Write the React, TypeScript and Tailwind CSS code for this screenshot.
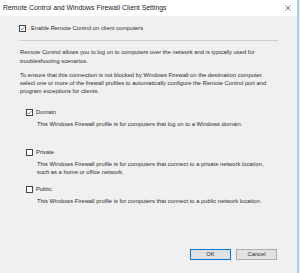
import React from 'react'

function Box({ checked }: { checked?: boolean }) {
  return (
    <span className="flex h-[7px] w-[7px] shrink-0 items-center justify-center border border-[#444444] bg-white">
      {checked && (
        <svg width="5" height="5" viewBox="0 0 10 10">
          <path d="M1 5.2 L3.8 8 L9 2" fill="none" stroke="#333" strokeWidth="1.3" />
        </svg>
      )}
    </span>
  )
}

function Profile({
  name,
  checked,
  lines,
  className,
}: {
  name: string
  checked?: boolean
  lines: string[]
  className?: string
}) {
  return (
    <div className={'flex flex-col ' + (className ?? '')}>
      <label className="flex items-center gap-[3px] leading-[9px]">
        <Box checked={checked} />
        <span>{name}</span>
      </label>
      <p className="mt-[3px] pl-[11px] leading-[8px]">
        {lines.map((l) => (
          <span key={l} className="block">
            {l}
          </span>
        ))}
      </p>
    </div>
  )
}

export default function App() {
  return (
    <div
      className="flex h-[273px] w-[300px] bg-[#f0f0f0] text-[5.8px] text-[#2b2b2b]"
      style={{ fontFamily: '"Liberation Sans", Arial, sans-serif' }}
    >
      <div className="flex w-[297px] flex-col">
        <div className="flex h-[16px] items-center justify-between bg-white pl-[3px] pr-[6px]">
          <span className="text-[6.9px] text-[#222]">Remote Control and Windows Firewall Client Settings</span>
          <svg width="6" height="6" viewBox="0 0 10 10">
            <path d="M1 1 L9 9 M9 1 L1 9" stroke="#444" strokeWidth="1.2" />
          </svg>
        </div>
        <div className="flex flex-1 flex-col pl-[19px] pr-[19px]">
          <label className="mt-[8px] flex items-center gap-[5px] leading-[9px]">
            <Box checked />
            <span>Enable Remote Control on client computers</span>
          </label>
          <div className="mt-[7px] h-px w-[259px] bg-[#cfcfcf]" />
          <p className="mt-[7px] pl-px leading-[9px]">
            <span className="block">
              Remote Control allows you to log on to computers over the network and is typically used for
            </span>
            <span className="block">troubleshooting scenarios.</span>
          </p>
          <p className="mt-[5px] pl-px leading-[8px]">
            <span className="block">
              To ensure that this connection is not blocked by Windows Firewall on the destination computer,
            </span>
            <span className="block">
              select one or more of the firewall profiles to automatically configure the Remote Control port and
            </span>
            <span className="block">program exceptions for clients.</span>
          </p>
          <div className="mt-[13px] flex flex-col pl-[7px]">
            <Profile
              name="Domain"
              checked
              lines={['This Windows Firewall profile is for computers that log on to a Windows domain.']}
            />
            <Profile
              className="mt-[20px]"
              name="Private"
              lines={[
                'This Windows Firewall profile is for computers that connect to a private network location,',
                'such as a home or office network.',
              ]}
            />
            <Profile
              className="mt-[9px]"
              name="Public"
              lines={['This Windows Firewall profile is for computers that connect to a public network location.']}
            />
          </div>
          <div className="mt-auto mb-[13px] flex justify-end gap-[5px] pr-[1px]">
            <button className="h-[11px] w-[41px] border border-[#0078d7] bg-[#e1e1e1] text-[5.8px] leading-none">
              OK
            </button>
            <button className="h-[11px] w-[41px] border border-[#adadad] bg-[#e1e1e1] text-[5.8px] leading-none">
              Cancel
            </button>
          </div>
        </div>
      </div>
      <div className="w-[2px] bg-[#9fcdf0]" />
      <div className="w-px bg-[#f0f0f0]" />
    </div>
  )
}
